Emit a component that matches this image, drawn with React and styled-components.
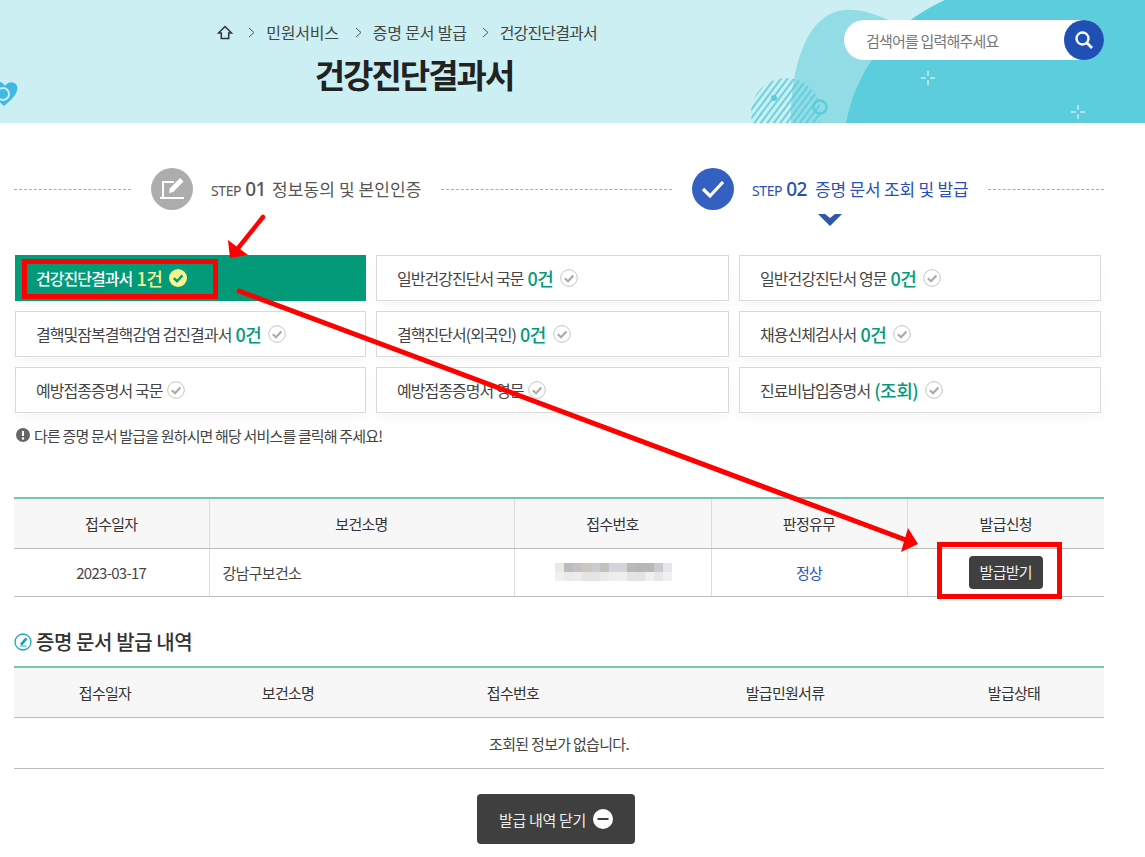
import React from "react";
import styled, { createGlobalStyle } from "styled-components";

const Global = createGlobalStyle`
  html, body {
    margin: 0;
    padding: 0;
    background: #fff;
    font-family: "Noto Sans CJK KR", "Noto Sans", sans-serif;
    color: #444;
  }
  * { box-sizing: border-box; }
`;

const Page = styled.div`
  position: relative;
  width: 1145px;
  height: 857px;
  overflow: hidden;
`;

const Header = styled.header`
  position: relative;
  height: 123px;
  background: #cbeff2;
  display: flex;
  justify-content: space-between;
  padding-right: 41px;
  overflow: hidden;
`;

const HeaderArt = styled.svg`
  position: absolute;
  left: 0;
  top: 0;
`;

const TitleBlock = styled.div`
  position: relative;
  width: 828px;
  display: flex;
  flex-direction: column;
  align-items: center;
`;

const Crumbs = styled.nav`
  display: flex;
  align-items: center;
  height: 22px;
  margin-top: 21px;
  margin-left: -14px;
  font-size: 16px;
  letter-spacing: -0.2px;
  color: #444;
`;

const CrumbSep = styled.svg`
  margin: 0 11px 0 ${(p) => p.$gap || 15}px;
`;

const LastCrumb = styled.span`
  letter-spacing: -0.85px;
`;

const PageTitle = styled.h1`
  margin: 7px 0 0;
  font-size: 33px;
  line-height: 48px;
  font-weight: 700;
  letter-spacing: -2px;
  color: #222;
`;

const SearchBox = styled.div`
  position: relative;
  width: 260px;
  height: 40px;
  margin-top: 20px;
  padding-left: 22px;
  background: #fff;
  border-radius: 20px;
  display: flex;
  align-items: center;
  justify-content: space-between;
  font-size: 15px;
  letter-spacing: -0.8px;
  color: #777;
`;

const SearchButton = styled.div`
  width: 40px;
  height: 40px;
  border-radius: 50%;
  background: #1f51b4;
  display: flex;
  align-items: center;
  justify-content: center;
`;

const Main = styled.main`
  padding: 45px 41px 0 14px;
`;

const Steps = styled.div`
  display: flex;
  align-items: center;
  height: 42px;
`;

const DashLine = styled.div`
  flex: ${(p) => (p.$w ? `0 0 ${p.$w}px` : "1")};
  border-top: 1px dashed #aaa;
`;

const StepCircle = styled.div`
  width: 42px;
  height: 42px;
  margin: 0 18px 0 20px;
  border-radius: 50%;
  background: ${(p) => (p.$active ? "#3461c1" : "#adadad")};
  display: flex;
  align-items: center;
  justify-content: center;
  flex-shrink: 0;
`;

const StepLabel = styled.div`
  position: relative;
  width: ${(p) => p.$w}px;
  margin-right: 20px;
  display: flex;
  align-items: baseline;
  white-space: nowrap;
  color: ${(p) => (p.$active ? "#2a50b5" : "#555")};
  font-size: 17px;
  letter-spacing: ${(p) => (p.$active ? "-0.2px" : "0.1px")};
`;

const StepWord = styled.span`
  font-family: "Noto Sans", sans-serif;
  font-size: 14px;
  letter-spacing: -0.4px;
  margin-right: 4px;
`;

const StepNum = styled.span`
  font-family: "Noto Sans", sans-serif;
  font-size: 19px;
  font-weight: 500;
  letter-spacing: -0.4px;
  margin-right: ${(p) => p.$gap}px;
`;

const StepCaret = styled.svg`
  position: absolute;
  left: 65px;
  top: 37px;
`;

const DocGrid = styled.div`
  display: grid;
  grid-template-columns: 351px 353px 362px;
  grid-auto-rows: 46px;
  gap: 10px;
  margin: 45px 0 0 1px;
`;

const DocCard = styled.div`
  display: flex;
  align-items: center;
  gap: 4px;
  padding-left: 20px;
  border: 1px solid ${(p) => (p.$on ? "#029a78" : "#d9d9d9")};
  background: ${(p) => (p.$on ? "#029a78" : "#fff")};
  box-shadow: 0 5px 10px rgba(0, 0, 0, 0.03);
  color: ${(p) => (p.$on ? "#fff" : "#444")};
  font-size: 16px;
  font-weight: ${(p) => (p.$on ? 500 : 400)};
  letter-spacing: -0.95px;
  white-space: nowrap;
`;

const Count = styled.b`
  margin-right: 3px;
  font-size: 18px;
  font-weight: 500;
  letter-spacing: -0.5px;
  color: ${(p) => (p.$on ? "#f7f58e" : "#029a78")};
`;

const Note = styled.p`
  display: flex;
  align-items: center;
  gap: 4px;
  margin: 12px 0 0 2px;
  height: 20px;
  font-size: 15px;
  letter-spacing: -0.84px;
  color: #444;
`;

const DataTable = styled.table`
  width: 1090px;
  table-layout: fixed;
  border-collapse: collapse;
  border-top: 2px solid #75c5b4;
  margin-top: ${(p) => p.$top}px;
  font-size: 15px;
  letter-spacing: -0.7px;
  color: #444;
`;

const Th = styled.th`
  height: ${(p) => (p.$plain ? 51 : 50)}px;
  padding: 0;
  width: ${(p) => p.$w}px;
  background: #f7f7f7;
  font-weight: 400;
  color: #333;
  border-bottom: 1px solid #bbb;
  border-left: ${(p) => (p.$plain ? "0" : "1px solid #ddd")};
  &:first-child { border-left: 0; }
`;

const Td = styled.td`
  height: 48px;
  padding: 0 ${(p) => (p.$left ? "13px" : "0")};
  text-align: ${(p) => (p.$left ? "left" : "center")};
  border-bottom: 1px solid #bbb;
  border-left: 1px solid #ddd;
  color: ${(p) => (p.$blue ? "#2a55c8" : "inherit")};
  &:first-child { border-left: 0; }
`;

const EmptyTd = styled.td`
  height: 51px;
  text-align: center;
  border-bottom: 1px solid #bbb;
`;

const Mosaic = styled.svg`
  display: block;
  margin: 0 auto;
  transform: translateX(1px);
`;

const IssueButton = styled.span`
  display: inline-block;
  width: 74px;
  height: 33px;
  line-height: 31px;
  margin-top: 1px;
  border-radius: 4px;
  background: #3f3f3f;
  color: #eee;
`;

const SectionTitle = styled.h2`
  display: flex;
  align-items: center;
  gap: 4px;
  height: 30px;
  margin: 30px 0 0;
  font-size: 20px;
  font-weight: 500;
  letter-spacing: -0.4px;
  color: #333;
`;

const ButtonRow = styled.div`
  display: flex;
  justify-content: center;
  margin: 25px 0 0 -6px;
`;

const CloseButton = styled.div`
  width: 158px;
  height: 50px;
  display: flex;
  align-items: center;
  justify-content: center;
  gap: 7px;
  border-radius: 4px;
  background: #3f3f3f;
  color: #eee;
  font-size: 15px;
  letter-spacing: -0.3px;
`;

const Annotations = styled.svg`
  position: absolute;
  left: 0;
  top: 0;
  pointer-events: none;
`;

const GreyCheck = () => (
  <svg width="18" height="18" viewBox="0 0 18 18">
    <circle cx="9" cy="9" r="8.3" fill="#fff" stroke="#c4c4c4" strokeWidth="1" />
    <path d="M4.8 9.2 L8 12.2 L13.4 6.4" fill="none" stroke="#aaa" strokeWidth="2.2" />
  </svg>
);

const YellowCheck = () => (
  <svg width="18" height="18" viewBox="0 0 18 18">
    <circle cx="9" cy="9" r="9" fill="#f7f58e" />
    <path d="M4.8 9.2 L8 12.2 L13.4 6.4" fill="none" stroke="#029a78" strokeWidth="2.4" />
  </svg>
);

const Chevron = ({ gap }) => (
  <CrumbSep width="7" height="11" viewBox="0 0 7 11" $gap={gap}>
    <path d="M1 1 L6 5.5 L1 10" fill="none" stroke="#555" strokeWidth="1" />
  </CrumbSep>
);

const docs = [
  { name: "건강진단결과서", count: "1건", on: true },
  { name: "일반건강진단서 국문", count: "0건" },
  { name: "일반건강진단서 영문", count: "0건" },
  { name: "결핵및잠복결핵감염 검진결과서", count: "0건" },
  { name: "결핵진단서(외국인)", count: "0건" },
  { name: "채용신체검사서", count: "0건" },
  { name: "예방접종증명서 국문" },
  { name: "예방접종증명서 영문" },
  { name: "진료비납입증명서", count: "(조회)" },
];

const topShades = ["#ece8e4", "#bcbcc0", "#c2c2c6", "#cbc6c0", "#c8ccd2", "#c4c0bc", "#d2d6da", "#d2d6da", "#bcb8b6", "#b6b6ba", "#bab6b4", "#c8cad0", "#e6e6e6"];
const lowShades = ["#f2f0ee", "#eaeaea", "#ececec", "#e6e4e2", "#e4e4e6", "#eceae8", "#eeeeee", "#f0efed", "#e4e4e4", "#e2e4e4", "#f0f0ee", "#e6e8e8", "#f0f0ee"];

const stripes = Array.from({ length: 20 }, (_, i) => i);

const App = () => {
  return (
    <Page>
      <Global />
      <Header>
        <HeaderArt width="1145" height="123" viewBox="0 0 1145 123">
          <path d="M791 123 C790 70 805 22 835 12 C860 3 900 20 950 60 L900 123 Z" fill="#92dce5" />
          <path d="M846 123 C858 60 900 20 945 0 L1145 0 L1145 123 Z" fill="#5bcddc" />
          <clipPath id="stripeClip">
            <circle cx="786" cy="113" r="35" />
          </clipPath>
          <g clipPath="url(#stripeClip)" stroke="#5bcddc" strokeWidth="2" opacity="0.85">
            {stripes.map((i) => (
              <line key={i} x1={710 + i * 6.5} y1="130" x2={755 + i * 6.5} y2="70" />
            ))}
          </g>
          <circle cx="774" cy="98" r="3" fill="#5bcddc" />
          <circle cx="820" cy="107" r="6.5" fill="none" stroke="#5bcddc" strokeWidth="2.5" />
          <path d="M928 71 V76 M928 80 V85 M921 78 H926 M930 78 H935 M1078 105 V110 M1078 114 V119 M1071 112 H1076 M1080 112 H1085" stroke="#fff" strokeWidth="1" />
          <path d="M-8 84 C-3 80 3 82 5 86 C8 81 15 81 17 86 C19 93 11 100 4 106 C-2 101 -10 92 -8 84 Z" fill="#3fb8e4" />
          <circle cx="3" cy="94" r="6" fill="none" stroke="#cbeff2" strokeWidth="2" />
          <path d="M0 94 H6 M3 91 V97" stroke="#3fb8e4" strokeWidth="2" />
        </HeaderArt>
        <TitleBlock>
          <Crumbs>
            <svg width="16" height="15" viewBox="0 0 15 15">
              <path d="M7.5 1.5 L14 8 H11.2 V13.5 H3.8 V8 H1 Z" fill="none" stroke="#333" strokeWidth="1.5" />
            </svg>
            <Chevron />
            민원서비스
            <Chevron gap={16} />
            증명 문서 발급
            <Chevron gap={15} />
            <LastCrumb>건강진단결과서</LastCrumb>
          </Crumbs>
          <PageTitle>건강진단결과서</PageTitle>
        </TitleBlock>
        <SearchBox>
          검색어를 입력해주세요
          <SearchButton>
            <svg width="20" height="20" viewBox="0 0 20 20">
              <circle cx="8.5" cy="8.5" r="6" fill="none" stroke="#fff" strokeWidth="2.4" />
              <path d="M13 13 L18 18" stroke="#fff" strokeWidth="2.8" />
            </svg>
          </SearchButton>
        </SearchBox>
      </Header>

      <Main>
        <Steps>
          <DashLine $w={117} />
          <StepCircle>
            <svg width="30" height="28" viewBox="0 0 30 28">
              <path d="M3 23 H27 M6 23 V7 H17" fill="none" stroke="#fff" strokeWidth="2" />
              <path d="M12 18 L12.8 13.5 L23 3 L26.5 6.5 L16.2 17 Z" fill="#fff" />
            </svg>
          </StepCircle>
          <StepLabel $w={210}>
            <StepWord>STEP</StepWord>
            <StepNum $gap={6}>01</StepNum>
            정보동의 및 본인인증
          </StepLabel>
          <DashLine $w={231} />
          <StepCircle $active>
            <svg width="26" height="22" viewBox="0 0 26 22">
              <path d="M3 11 L10 18 L23 4" fill="none" stroke="#fff" strokeWidth="3.2" />
            </svg>
          </StepCircle>
          <StepLabel $active $w={216}>
            <StepWord>STEP</StepWord>
            <StepNum $gap={8}>02</StepNum>
            증명 문서 조회 및 발급
            <StepCaret width="26" height="13" viewBox="0 0 26 13">
              <path d="M1 1 H8 L13 5 L18 1 H25 L13 13 Z" fill="#2f58ad" />
            </StepCaret>
          </StepLabel>
          <DashLine />
        </Steps>

        <DocGrid>
          {docs.map((doc) => (
            <DocCard key={doc.name} $on={doc.on}>
              <span>{doc.name}</span>
              {doc.count && <Count $on={doc.on}>{doc.count}</Count>}
              {doc.on ? <YellowCheck /> : <GreyCheck />}
            </DocCard>
          ))}
        </DocGrid>

        <Note>
          <svg width="14" height="14" viewBox="0 0 14 14">
            <circle cx="7" cy="7" r="7" fill="#666" />
            <path d="M7 3 V8" stroke="#fff" strokeWidth="2" />
            <circle cx="7" cy="10.5" r="1.2" fill="#fff" />
          </svg>
          다른 증명 문서 발급을 원하시면 해당 서비스를 클릭해 주세요!
        </Note>

        <DataTable $top={52}>
          <thead>
            <tr>
              <Th $w={195}>접수일자</Th>
              <Th $w={305}>보건소명</Th>
              <Th $w={197}>접수번호</Th>
              <Th $w={196}>판정유무</Th>
              <Th $w={197}>발급신청</Th>
            </tr>
          </thead>
          <tbody>
            <tr>
              <Td>2023-03-17</Td>
              <Td $left>강남구보건소</Td>
              <Td>
                <Mosaic width="117" height="18" viewBox="0 0 117 18">
                  {topShades.map((c, i) => (
                    <rect key={i} x={i * 9} y="0" width="9" height="9" fill={c} />
                  ))}
                  {lowShades.map((c, i) => (
                    <rect key={i} x={i * 9} y="9" width="9" height="9" fill={c} />
                  ))}
                </Mosaic>
              </Td>
              <Td $blue>정상</Td>
              <Td>
                <IssueButton>발급받기</IssueButton>
              </Td>
            </tr>
          </tbody>
        </DataTable>

        <SectionTitle>
          <svg width="18" height="18" viewBox="0 0 18 18">
            <circle cx="9" cy="9" r="8" fill="#fff" stroke="#14a5c5" strokeWidth="1.3" />
            <path d="M6 13 H12.5 M6.5 10.8 L11.5 5 L13 6.3 L8 12 Z" fill="#14a5c5" stroke="#14a5c5" strokeWidth="1" />
          </svg>
          증명 문서 발급 내역
        </SectionTitle>

        <DataTable $top={9}>
          <thead>
            <tr>
              <Th $w={182} $plain>접수일자</Th>
              <Th $w={184} $plain>보건소명</Th>
              <Th $w={266} $plain>접수번호</Th>
              <Th $w={278} $plain>발급민원서류</Th>
              <Th $w={180} $plain>발급상태</Th>
            </tr>
          </thead>
          <tbody>
            <tr>
              <EmptyTd colSpan={5}>조회된 정보가 없습니다.</EmptyTd>
            </tr>
          </tbody>
        </DataTable>

        <ButtonRow>
          <CloseButton>
            발급 내역 닫기
            <svg width="20" height="20" viewBox="0 0 20 20">
              <circle cx="10" cy="10" r="10" fill="#fff" />
              <path d="M4.5 10 H15.5" stroke="#3f3f3f" strokeWidth="2" />
            </svg>
          </CloseButton>
        </ButtonRow>
      </Main>

      <Annotations width="1145" height="857" viewBox="0 0 1145 857">
        <rect x="24.5" y="261.5" width="191" height="35" fill="none" stroke="#f00" strokeWidth="5" />
        <rect x="939.5" y="544.5" width="120" height="52" fill="none" stroke="#f00" strokeWidth="5" />
        <path d="M263 217 L239 247" stroke="#f00" strokeWidth="4.5" strokeLinecap="round" />
        <path d="M230 258 L228 240 L248 255 Z" fill="#f00" />
        <path d="M239 291 L906 540" stroke="#f00" strokeWidth="5" strokeLinecap="round" />
        <path d="M918 544 L908 528 L901 552 Z" fill="#f00" />
      </Annotations>
    </Page>
  );
};

export default App;
